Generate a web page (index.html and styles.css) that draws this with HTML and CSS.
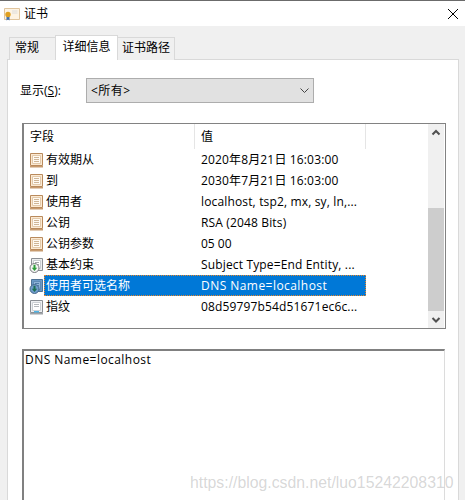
FILE: index.html
```html
<!DOCTYPE html>
<html lang="zh">
<head>
<meta charset="utf-8">
<title>证书</title>
<link rel="stylesheet" href="styles.css">
</head>
<body>
<svg class="defs" width="0" height="0" aria-hidden="true">
  <symbol id="doc" viewBox="0 0 15 16">
    <path d="M1.500 1.500h12v12h-12z" fill="#fbe9d2" stroke="#b98a5c"/>
    <path d="M1 14h13v1.500H1z" fill="#c79a6e"/>
    <path d="M3.500 3.500h8v8h-8z" fill="#fffaf2" stroke="#e2c9aa"/>
    <path d="M5 5.500h5M5 7.500h5M5 9.500h5" stroke="#cfb596"/>
  </symbol>
  <symbol id="plain" viewBox="0 0 15 16">
    <path d="M1.500 1.500h12v12h-12z" fill="#eef0f2" stroke="#8b8f94"/>
    <path d="M1 14h13v1.500H1z" fill="#9ea3a8"/>
    <path d="M3.500 3.500h8v8h-8z" fill="#fff" stroke="#ccd0d4"/>
    <path d="M5 5.500h5M5 7.500h5" stroke="#b5b9bd"/>
    <path d="M5 12h5v1.500H5z" fill="#4fb4e6"/>
  </symbol>
  <symbol id="ext" viewBox="0 0 15 16">
    <path d="M2.500 1.500h11v12h-11z" fill="#eceeef" stroke="#8b8f94"/>
    <path d="M4.500 3.500h7v8h-7z" fill="#fff" stroke="#c8ccd0"/>
    <path d="M6 5.500h4M6 7.500h4" stroke="#a5a9ad"/>
    <circle cx="5.500" cy="11" r="4.500" fill="#f4f4f4" stroke="#77797c"/>
    <path d="M4.500 7.800h2v3h1.700L5.500 14l-2.700-3.200h1.700z" fill="#2f9e3b"/>
  </symbol>
  <symbol id="ext-sel" viewBox="0 0 15 16">
    <path d="M2.500 1.500h11v12h-11z" fill="#6b9ac8" stroke="#4f7396"/>
    <path d="M4.500 3.500h7v8h-7z" fill="#8fb3d8" stroke="#5f8bb5"/>
    <path d="M6 5.500h4M6 7.500h4" stroke="#4f7da8"/>
    <circle cx="5.500" cy="11" r="4.500" fill="#6f9ccb" stroke="#47698c"/>
    <path d="M4.500 7.800h2v3h1.700L5.500 14l-2.700-3.200h1.700z" fill="#1c6f53"/>
  </symbol>
</svg>

<header class="titlebar">
  <svg class="cert-icon" viewBox="0 0 16 14" width="16" height="14" aria-hidden="true">
    <path d="M.5 1.500h15v11H.5z" fill="#fdf3e3" stroke="#e0c49c"/>
    <path d="M8 4h5.500M8 6h5.500" stroke="#dcdcdc"/>
    <path d="M2.500 9h3v4.500l-1.500-1-1.500 1z" fill="#3d6fb0"/>
    <circle cx="4" cy="7.500" r="2.700" fill="#e0a020"/>
  </svg>
  <span class="title">证书</span>
  <svg class="close" viewBox="0 0 10 10" width="10" height="10" aria-hidden="true">
    <path d="M0 0l10 10M10 0L0 10" stroke="#000" stroke-width="1" fill="none"/>
  </svg>
</header>

<main class="dialog">
  <nav class="tabs">
    <div class="tab tab-first">常规</div>
    <div class="tab tab-active">详细信息</div>
    <div class="tab tab-last">证书路径</div>
  </nav>
  <section class="panel">
    <div class="show-row">
      <label class="show-label">显示(<u>S</u>):</label>
      <div class="select">
        <span class="select-text">&lt;所有&gt;</span>
        <svg class="chevron" viewBox="0 0 9 5" width="9" height="5" aria-hidden="true">
          <path d="M.5.500l4 4 4-4" stroke="#444" fill="none"/>
        </svg>
      </div>
    </div>

    <div class="list">
      <div class="list-main">
        <div class="row head">
          <div class="cell-name">字段</div>
          <div class="cell-value">值</div>
        </div>
        <div class="row"><div class="cell-name"><svg class="ficon"><use href="#doc"/></svg>有效期从</div><div class="cell-value latin">2020年8月21日 16:03:00</div></div>
        <div class="row"><div class="cell-name"><svg class="ficon"><use href="#doc"/></svg>到</div><div class="cell-value latin">2030年7月21日 16:03:00</div></div>
        <div class="row"><div class="cell-name"><svg class="ficon"><use href="#doc"/></svg>使用者</div><div class="cell-value latin">localhost, tsp2, mx, sy, ln,...</div></div>
        <div class="row"><div class="cell-name"><svg class="ficon"><use href="#doc"/></svg>公钥</div><div class="cell-value latin">RSA (2048 Bits)</div></div>
        <div class="row"><div class="cell-name"><svg class="ficon"><use href="#doc"/></svg>公钥参数</div><div class="cell-value">05 00</div></div>
        <div class="row"><div class="cell-name"><svg class="ficon"><use href="#ext"/></svg>基本约束</div><div class="cell-value latin">Subject Type=End Entity, ...</div></div>
        <div class="row selected">
          <svg class="ficon ficon-sel"><use href="#ext-sel"/></svg>
          <div class="sel-band">
            <span class="sel-name">使用者可选名称</span>
            <span class="sel-value dns">DNS Name=localhost</span>
          </div>
        </div>
        <div class="row"><div class="cell-name"><svg class="ficon"><use href="#plain"/></svg>指纹</div><div class="cell-value latin">08d59797b54d51671ec6c...</div></div>
      </div>
      <div class="scrollbar">
        <svg class="arrow" viewBox="0 0 16 17" width="16" height="17" aria-hidden="true"><path d="M4.500 10.500L8 7l3.500 3.500" stroke="#505050" stroke-width="2" fill="none"/></svg>
        <div class="track"><div class="thumb"></div></div>
        <svg class="arrow" viewBox="0 0 16 17" width="16" height="17" aria-hidden="true"><path d="M4.500 7L8 10.500 11.500 7" stroke="#505050" stroke-width="2" fill="none"/></svg>
      </div>
    </div>

    <div class="detail dns">DNS Name=localhost</div>
  </section>
</main>
<div class="watermark">https://blog.csdn.net/luo15242208310</div>
</body>
</html>
```
FILE: styles.css
```css
* { box-sizing: border-box; }
html, body { margin: 0; height: 500px; overflow: hidden; }
body {
  position: relative;
  display: flex;
  flex-direction: column;
  background: #fff;
  color: #000;
  font: 12px/16px "Open Sans", "Noto Sans CJK SC", sans-serif;
}
.defs { position: absolute; }
.titlebar {
  height: 26px;
  flex: none;
  display: flex;
  align-items: center;
  border-top: 1px solid #6b6b6b;
  padding: 1px 7px 0 4px;
  background: #fff;
}
.title { margin-left: 4px; flex: 1; }
.close { flex: none; }
.dialog {
  flex: 1;
  min-height: 0;
  background: #f0f0f0;
  padding: 9px 6px 0 7px;
  display: flex;
  flex-direction: column;
}
.tabs {
  display: flex;
  align-items: flex-end;
  height: 25px;
  flex: none;
  padding-left: 2px;
  position: relative;
  z-index: 1;
  margin-bottom: -1px;
}
.tab {
  height: 23px;
  line-height: 20px;
  text-align: center;
  background: #f0f0f0;
  border: 1px solid #d9d9d9;
  border-bottom: 0;
  width: 46px;
}
.tab-first { border-right: 0; text-align: left; padding-left: 5px; }
.tab-active {
  height: 25px;
  width: 63px;
  background: #fff;
  line-height: 22px;
  border: 1px solid #d9d9d9;
  border-bottom: 0;
}
.tab-last { width: 57px; border-left: 0; }
.panel {
  flex: 1;
  min-height: 0;
  background: #fff;
  border: 1px solid #d9d9d9;
  border-bottom: 0;
  padding: 18px 12px 0 14px;
}
.show-row {
  display: flex;
  align-items: center;
  height: 25px;
  margin-left: -2px;
}
.show-label { width: 66px; flex: none; }
.select {
  width: 228px;
  height: 25px;
  display: flex;
  align-items: center;
  justify-content: space-between;
  background: #e1e1e1;
  border: 1px solid #adadad;
  padding: 0 4px;
}
.select-text { letter-spacing: 0.5px; }
.chevron { flex: none; }
.list {
  margin-top: 20px;
  height: 206px;
  display: flex;
  border: 1px solid #828282;
  border-left-width: 2px;
  padding-right: 1px;
}
.list-main { flex: 1; min-width: 0; }
.row {
  display: flex;
  height: 21px;
  align-items: center;
}
.head { height: 25px; align-items: stretch; }
.head .cell-name { padding-left: 6px; }
.head .cell-value { display: flex; align-items: center; }
.head .cell-name, .head .cell-value { border-right: 1px solid #e5e5e5; }
.cell-name {
  width: 171px;
  flex: none;
  display: flex;
  align-items: center;
  padding-left: 5px;
  height: 100%;
}
.cell-value {
  width: 171px;
  flex: none;
  padding-left: 6px;
  white-space: nowrap;
}
.latin { letter-spacing: 0.15px; }
.dns { letter-spacing: 0.45px; }
.ficon { width: 15px; height: 16px; flex: none; margin-right: 2px; }
.ficon-sel { margin: 0 0 0 5px; }
.selected { color: #fff; }
.sel-band {
  width: 322px;
  height: 21px;
  display: flex;
  align-items: center;
  background: #0078d7;
  outline: 1px dotted #e8872a;
  outline-offset: -1px;
}
.sel-name { width: 151px; flex: none; padding-left: 2px; }
.sel-value { padding-left: 6px; white-space: nowrap; }
.scrollbar {
  width: 16px;
  flex: none;
  display: flex;
  flex-direction: column;
  background: #f0f0f0;
}
.arrow { flex: none; }
.track { flex: 1; display: flex; flex-direction: column; justify-content: flex-end; }
.thumb { height: 103px; background: #cdcdcd; }
.detail {
  margin: 20px 1px 0 0;
  height: 151px;
  border-top: 2px solid #808080;
  border-left: 2px solid #808080;
  border-right: 1px solid #dcdcdc;
  padding: 1px;
  background: #fff;
}
.watermark {
  position: absolute;
  left: 190px;
  top: 473px;
  font: 15.800px/20px "Liberation Sans", sans-serif;
  color: rgba(120, 120, 120, 0.3);
  white-space: nowrap;
}
```
